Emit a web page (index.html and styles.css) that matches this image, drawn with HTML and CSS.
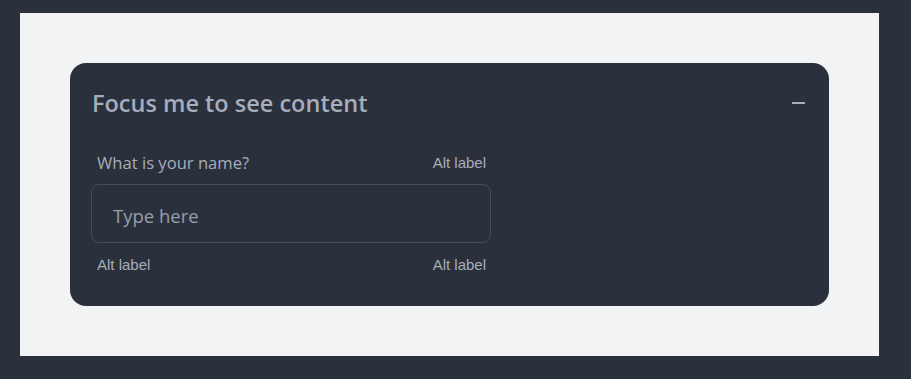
FILE: index.html
```html
<!DOCTYPE html>
<html>
<head>
<meta charset="utf-8">
<link rel="stylesheet" href="styles.css">
</head>
<body>
<div class="panel">
  <div class="card">
    <div class="title-row">
      <div class="title">Focus me to see content</div>
      <div class="minus"></div>
    </div>
    <div class="content">
      <div class="form-control">
        <div class="label-row top">
          <span class="label-main">What is your name?</span>
          <span class="label-alt">Alt label</span>
        </div>
        <div class="input"><span class="placeholder">Type here</span></div>
        <div class="label-row bottom">
          <span class="label-alt">Alt label</span>
          <span class="label-alt">Alt label</span>
        </div>
      </div>
    </div>
  </div>
</div>
</body>
</html>
```

FILE: styles.css
```css
html, body {
  margin: 0;
  padding: 0;
  background: #2a303c;
  font-family: "Open Sans", "Noto Sans", sans-serif;
}
body {
  padding: 13px 0 0 20px;
}
.panel {
  width: 859px;
  height: 343px;
  box-sizing: border-box;
  background: #f2f3f5;
  padding: 50px;
}
.card {
  width: 759px;
  height: 243px;
  box-sizing: border-box;
  background: #2a303c;
  border-radius: 16px;
  padding: 0 24px 0 21px;
  color: #a6adbb;
}
.title-row {
  height: 80px;
  display: flex;
  align-items: center;
  justify-content: space-between;
  padding-left: 1px;
}
.title {
  font-size: 23.5px;
  font-weight: 600;
  line-height: 30px;
}
.minus {
  width: 13px;
  height: 2px;
  background: #a6adbb;
}
.form-control {
  width: 400px;
}
.label-row {
  display: flex;
  justify-content: space-between;
  align-items: center;
  padding: 0 5px 0 6px;
}
.label-row.top {
  height: 38px;
  margin-bottom: 3px;
}
.label-row.bottom {
  height: 42px;
}
.label-main {
  font-size: 16.6px;
}
.label-alt {
  font-family: "Liberation Sans", Arial, sans-serif;
  font-size: 15px;
}
.input {
  height: 59px;
  box-sizing: border-box;
  border: 1px solid #474d59;
  border-radius: 8px;
  display: flex;
  align-items: center;
  padding: 3px 0 0 21px;
}
.placeholder {
  font-size: 18.5px;
  color: #979eab;
}
```
